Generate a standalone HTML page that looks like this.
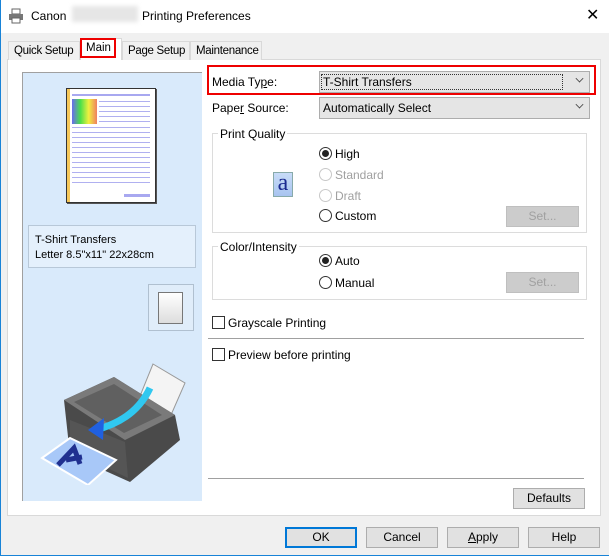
<!DOCTYPE html>
<html><head><style>
*{margin:0;padding:0;box-sizing:border-box}
body{width:609px;height:556px;background:#f0f0f0;font-family:"Liberation Sans",sans-serif;font-size:12px;color:#000;position:relative;overflow:hidden;white-space:nowrap}
.a{position:absolute}
.btn{position:absolute;background:#e1e1e1;border:1px solid #adadad;text-align:center;line-height:19px;height:21px}
.dis{color:#a0a0a0;background:#cccccc;border-color:#bfbfbf}
.grp{position:absolute;border:1px solid #dcdcdc}
.gl{position:absolute;background:#fff;padding:0 2px}
.rad{position:absolute;width:13px;height:13px;border:1px solid #333;border-radius:50%;background:#fff}
.rad.on::after{content:"";position:absolute;left:2px;top:2px;width:7px;height:7px;border-radius:50%;background:#222}
.rad.d{border-color:#c8c8c8}
.chk{position:absolute;width:13px;height:13px;border:1px solid #333;background:#fff}
.sel{position:absolute;background:#e5e5e5;border:1px solid #adadad;height:22px;line-height:20px;padding-left:3px}
.sel .ar{position:absolute;right:6px;top:3px;width:7px;height:7px;border-right:1px solid #444;border-bottom:1px solid #444;transform:rotate(45deg) scale(.8)}
.ln{position:absolute;height:1px;background:#a0a0a0}
.tab{position:absolute;top:41px;height:19px;border:1px solid #d9d9d9;border-bottom:none;background:#f0f0f0;padding:3px 0 0 5px;font-size:11.5px;letter-spacing:-0.3px}
</style></head><body>
<div class="a" style="left:0;top:0;width:609px;height:33px;background:#fff"></div>
<div class="a" style="left:0;top:0;width:1px;height:556px;background:#1883d7"></div>
<div class="a" style="left:0;top:555px;width:609px;height:1px;background:#1883d7"></div>
<svg class="a" style="left:8px;top:8px" width="16" height="16"><rect x="4" y="1" width="8" height="5" fill="#fff" stroke="#666"/><rect x="1" y="6" width="14" height="6" fill="#777"/><rect x="4" y="10" width="8" height="5" fill="#fff" stroke="#666"/></svg>
<div class="a" style="left:31px;top:9px;font-size:12px">Canon</div>
<div class="a" style="left:72px;top:6px;width:66px;height:16px;background:#e6e6e6;filter:blur(2px)"></div>
<div class="a" style="left:142px;top:9px;font-size:12px">Printing Preferences</div>
<div class="a" style="left:586px;top:5px;font-size:16px">✕</div>
<div class="a" style="left:7px;top:59px;width:594px;height:457px;background:#fff;border:1px solid #d9d9d9"></div>
<div class="tab" style="left:8px;width:72px">Quick Setup</div>
<div class="a" style="left:80px;top:38px;width:42px;height:22px;background:#fff;border:1px solid #d9d9d9;border-bottom:none"></div>
<div class="a" style="left:80px;top:38px;width:36px;height:20px;border:2px solid #e00;padding:2px 0 0 4px;font-size:11.5px">Main</div>
<div class="tab" style="left:122px;width:68px">Page Setup</div>
<div class="tab" style="left:190px;width:72px">Maintenance</div>
<div class="a" style="left:22px;top:72px;width:180px;height:429px;background:#d9eafb;border:1px solid #a0a0a0;border-right:none;border-bottom:none"></div>
<div class="a" style="left:66px;top:88px;width:90px;height:115px;background:#fff;border:1px solid #333;box-shadow:1px 1px 0 #555"></div>
<div class="a" style="left:67px;top:89px;width:3px;height:113px;background:#f6c85a"></div>
<div class="a" style="left:72px;top:99px;width:25px;height:25px;background:linear-gradient(90deg,#6a6af0,#4ae04a,#f0f040,#f08060)"></div>
<svg class="a" style="left:72px;top:92px" width="80" height="108">
<rect x="0" y="2" width="78" height="2" fill="#a8a8f0"/>
<g stroke="#b0b0f0" stroke-width="1">
<line x1="27" x2="78" y1="9.5" y2="9.5"/><line x1="27" x2="78" y1="14.5" y2="14.5"/><line x1="27" x2="78" y1="19.5" y2="19.5"/><line x1="27" x2="78" y1="24.5" y2="24.5"/><line x1="27" x2="78" y1="29.5" y2="29.5"/>
<line x1="0" x2="78" y1="35.5" y2="35.5"/><line x1="0" x2="78" y1="40.5" y2="40.5"/><line x1="0" x2="78" y1="45.5" y2="45.5"/><line x1="0" x2="78" y1="50.5" y2="50.5"/><line x1="0" x2="78" y1="55.5" y2="55.5"/><line x1="0" x2="78" y1="60.5" y2="60.5"/><line x1="0" x2="78" y1="65.5" y2="65.5"/><line x1="0" x2="78" y1="70.5" y2="70.5"/><line x1="0" x2="78" y1="75.5" y2="75.5"/><line x1="0" x2="78" y1="80.5" y2="80.5"/><line x1="0" x2="78" y1="85.5" y2="85.5"/><line x1="0" x2="78" y1="90.5" y2="90.5"/></g>
<rect x="52" y="102" width="26" height="3" fill="#a8a8f0"/></svg>
<div class="a" style="left:28px;top:225px;width:168px;height:43px;background:#e4f0fc;border:1px solid #b8c8d8;padding:7px 0 0 6px;line-height:15px;font-size:11px">T-Shirt Transfers<br>Letter 8.5"x11" 22x28cm</div>
<div class="a" style="left:148px;top:284px;width:46px;height:47px;border:1px solid #b0c0d0;background:#e0edfa"></div>
<div class="a" style="left:158px;top:292px;width:25px;height:32px;background:linear-gradient(#fff,#ddd);border:1px solid #777"></div>
<svg class="a" style="left:40px;top:360px" width="150" height="125">
<polygon points="113,4 145,23 131,55 100,36" fill="#f4f4f4" stroke="#999"/>
<path d="M24,40 L74,17 L135,55 L140,80 L90,122 L30,95 Z" fill="#4a4a4a"/>
<path d="M24,40 L74,17 L135,55 L85,80 Z" fill="#7a7a7a"/>
<path d="M34,42 L74,24 L122,55 L84,73 Z" fill="#606060"/>
<path d="M30,90 L30,60 L85,82 L88,118 Z" fill="#555"/>
<polygon points="2,98 30,78 76,100 48,125" fill="#a8c8f8" stroke="#fff" stroke-width="2"/>
<path d="M18,105 L34,88 L40,104 M26,100 L42,97" stroke="#203090" stroke-width="5" fill="none"/>
<path d="M110,28 Q95,60 55,70" stroke="#30c8f0" stroke-width="7" fill="none"/>
<polygon points="48,70 64,58 63,80" fill="#2060e0"/>
</svg>
<div class="a" style="left:207px;top:65px;width:389px;height:30px;border:2px solid #e00"></div>
<div class="a" style="left:212px;top:75px">Media Ty<u>p</u>e:</div>
<div class="sel" style="left:319px;top:71px;width:271px">T-Shirt Transfers<div class="ar"></div></div>
<div class="a" style="left:321px;top:74px;width:242px;height:16px;border:1px dotted #333"></div>
<div class="a" style="left:212px;top:101px">Pape<u>r</u> Source:</div>
<div class="sel" style="left:319px;top:97px;width:271px">Automatically Select<div class="ar"></div></div>
<div class="grp" style="left:212px;top:133px;width:375px;height:100px"></div>
<div class="gl" style="left:218px;top:127px">Print Quality</div>
<div class="a" style="left:273px;top:172px;width:20px;height:25px;background:linear-gradient(#c8dcf8,#a8c4f0);border:1px solid #8aa;color:#1a2a90;font:24px 'Liberation Serif',serif;line-height:20px;text-align:center">a</div>
<div class="rad on" style="left:319px;top:147px"></div><div class="a" style="left:335px;top:147px">High</div>
<div class="rad d" style="left:319px;top:168px"></div><div class="a" style="left:335px;top:168px;color:#a0a0a0">Standard</div>
<div class="rad d" style="left:319px;top:189px"></div><div class="a" style="left:335px;top:189px;color:#a0a0a0">Draft</div>
<div class="rad" style="left:319px;top:209px"></div><div class="a" style="left:335px;top:209px">Custom</div>
<div class="btn dis" style="left:506px;top:206px;width:73px">Set...</div>
<div class="grp" style="left:212px;top:246px;width:375px;height:54px"></div>
<div class="gl" style="left:218px;top:240px">Color/Intensity</div>
<div class="rad on" style="left:319px;top:254px"></div><div class="a" style="left:335px;top:254px">Auto</div>
<div class="rad" style="left:319px;top:276px"></div><div class="a" style="left:335px;top:276px">Manual</div>
<div class="btn dis" style="left:506px;top:272px;width:73px">Set...</div>
<div class="chk" style="left:212px;top:316px"></div><div class="a" style="left:228px;top:316px">Grayscale Printing</div>
<div class="ln" style="left:208px;top:338px;width:376px"></div>
<div class="chk" style="left:212px;top:348px"></div><div class="a" style="left:228px;top:348px">Preview before printing</div>
<div class="ln" style="left:208px;top:478px;width:376px"></div>
<div class="btn" style="left:513px;top:488px;width:72px">Defaults</div>
<div class="btn" style="left:285px;top:527px;width:72px;border:2px solid #0078d7;line-height:17px">OK</div>
<div class="btn" style="left:366px;top:527px;width:72px">Cancel</div>
<div class="btn" style="left:447px;top:527px;width:72px"><u>A</u>pply</div>
<div class="btn" style="left:528px;top:527px;width:72px">Help</div>
</body></html>
